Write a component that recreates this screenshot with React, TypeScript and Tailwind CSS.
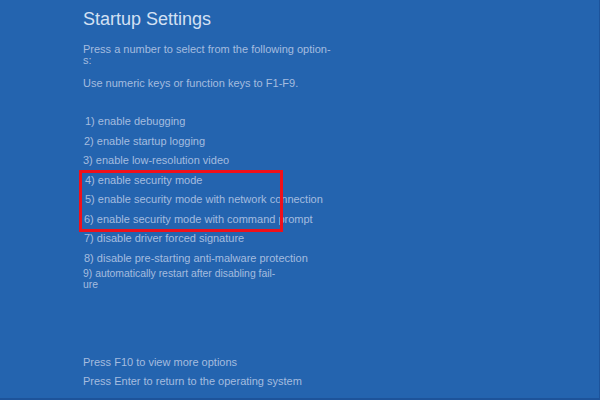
const items = [
  { label: "1) enable debugging", indent: "pl-[2px]" },
  { label: "2) enable startup logging", indent: "pl-[1px]" },
  { label: "3) enable low-resolution video", indent: "pl-0" },
  { label: "4) enable security mode", indent: "pl-[2px]" },
  { label: "5) enable security mode with network connection", indent: "pl-[2px]" },
  { label: "6) enable security mode with command prompt", indent: "pl-[1px]" },
  { label: "7) disable driver forced signature", indent: "pl-[1px]" },
  { label: "8) disable pre-starting anti-malware protection", indent: "pl-[1px]" },
];

export default function App() {
  return (
    <div
      className="relative w-[600px] h-[400px] overflow-hidden bg-[#2464af] border-b-2 border-r border-[#1d539a] text-[#a5bcdf]"
      style={{ fontFamily: '"Liberation Sans", Arial, sans-serif' }}
    >
      <div className="flex flex-col pl-[83px] pt-[9px]">
        <h1 className="text-[18px] leading-[21px] text-[#d3e0f3]">Startup Settings</h1>

        <div className="mt-[14px] text-[11px] leading-[11px]">
          <p>Press a number to select from the following option-</p>
          <p>s:</p>
        </div>
        <p className="mt-[12px] text-[11px] leading-[11px]">
          Use numeric keys or function keys to F1-F9.
        </p>

        <ul className="mt-[23px] text-[11px] leading-[19.5px]">
          {items.map((item) => (
            <li key={item.label} className={item.indent}>
              {item.label}
            </li>
          ))}
        </ul>

        <div className="text-[10.4px] leading-[11px]">
          <p>9) automatically restart after disabling fail-</p>
          <p>ure</p>
        </div>

        <div className="mt-[63px] text-[11px] leading-[19px]">
          <p>Press F10 to view more options</p>
          <p>Press Enter to return to the operating system</p>
        </div>
      </div>

      {/* highlight around options 4-6 */}
      <div className="absolute left-[79px] top-[170px] w-[204px] h-[62px] border-[3px] border-[#f0101a]" />
    </div>
  );
}
